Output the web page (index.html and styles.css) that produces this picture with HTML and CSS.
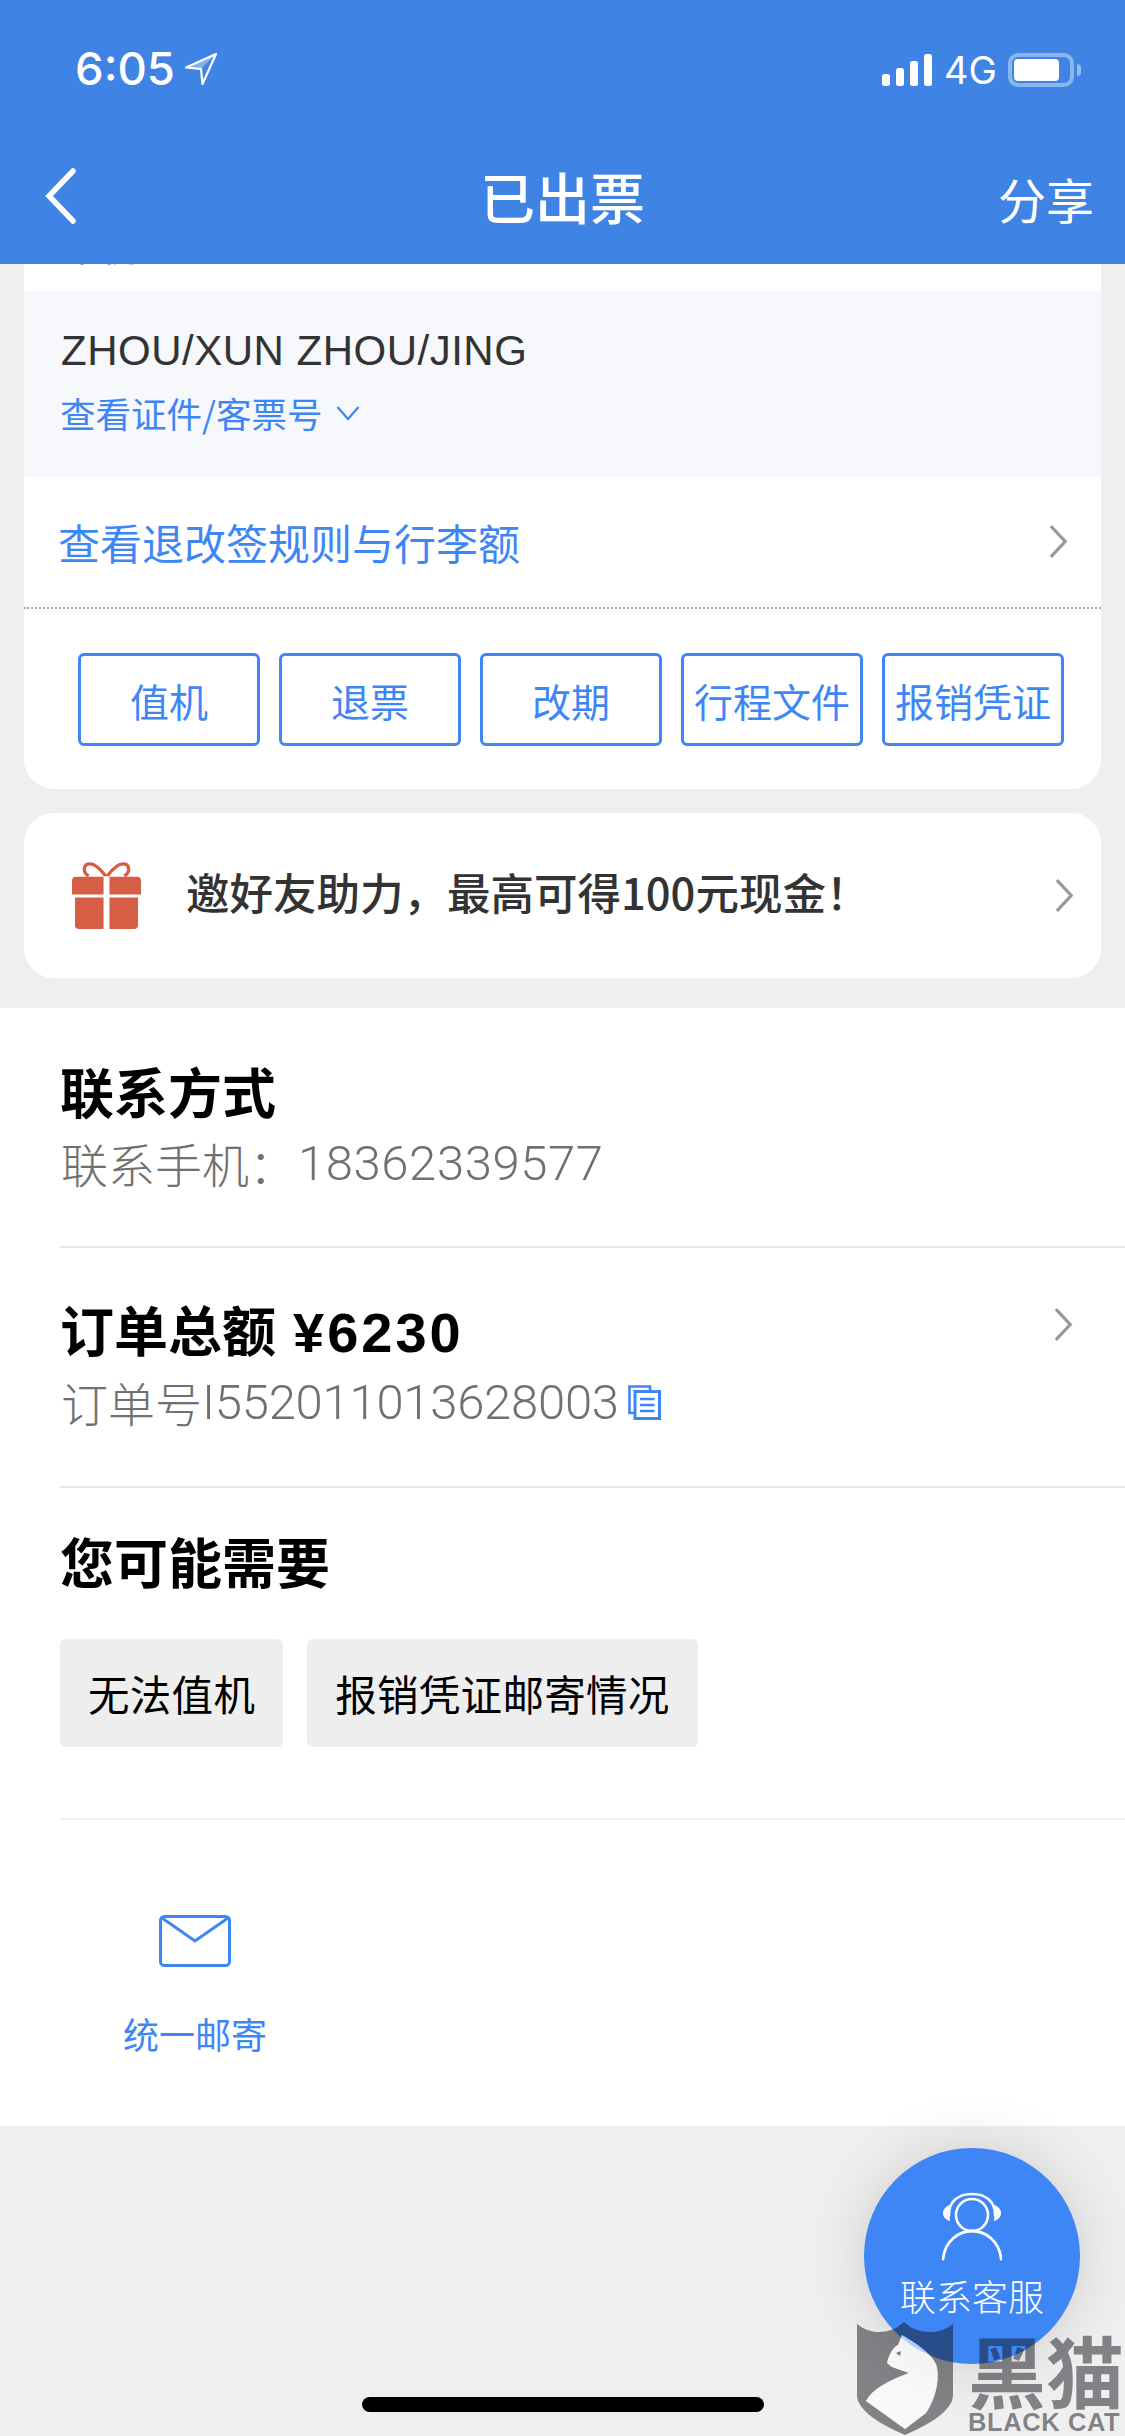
FILE: index.html
```html
<!DOCTYPE html>
<html lang="zh-CN">
<head>
<meta charset="utf-8">
<title>已出票</title>
<link rel="stylesheet" href="styles.css">
</head>
<body>
<div class="screen">
  <header class="top">
    <div class="status">
      <div class="status-left">
        <span class="time">6:05</span>
        <svg class="loc" width="32" height="32" viewBox="0 0 32 32"><path d="M1 14.500 31 1 17.500 31 16 16Z" fill="none" stroke="#fff" stroke-width="2.200" stroke-linejoin="miter"/><path d="M1 14.500 16 16 31 1Z" fill="#fff" fill-opacity=".35"/></svg>
      </div>
      <div class="status-right">
        <div class="bars"><i class="b1"></i><i class="b2"></i><i class="b3"></i><i class="b4"></i></div>
        <span class="net">4G</span>
        <div class="battery"><div class="level"></div></div>
        <div class="nub"></div>
      </div>
    </div>
    <nav class="nav">
      <svg class="back" width="32" height="56" viewBox="0 0 32 56"><path d="M28 3 4 28 28 53" fill="none" stroke="#fff" stroke-width="5.500" stroke-linecap="round" stroke-linejoin="miter"/></svg>
      <h1 class="title">已出票</h1>
      <span class="share">分享</span>
    </nav>
  </header>

  <section class="upper">
    <div class="card main">
      <div class="clip"><span>乘机人</span></div>
      <div class="passenger">
        <div class="name">ZHOU/XUN ZHOU/JING</div>
        <div class="docs">查看证件/客票号
          <svg class="down" width="24" height="16" viewBox="0 0 24 16"><path d="M1.500 2 12 14 22.500 2" fill="none" stroke="#3f86f5" stroke-width="2.200"/></svg>
        </div>
      </div>
      <div class="rules">
        <span>查看退改签规则与行李额</span>
        <svg class="chev" width="21" height="35" viewBox="0 0 22 36"><path d="M3 2 18 18 3 34" fill="none" stroke="#999" stroke-width="3.400"/></svg>
      </div>
      <div class="actions">
        <a class="act">值机</a><a class="act">退票</a><a class="act">改期</a><a class="act">行程文件</a><a class="act">报销凭证</a>
      </div>
    </div>
    <div class="card promo">
      <svg class="gift" width="69" height="67" viewBox="0 0 70 68">
        <path d="M34 14C28 6 22 1 17 2 11 3 11 11 17 14M36 14C42 6 48 1 53 2 59 3 59 11 53 14" fill="none" stroke="#d55e45" stroke-width="3.400"/>
        <path d="M4 15H32V33H0V19Q0 15 4 15ZM38 15H66Q70 15 70 19V33H38ZM3 36H32V68H7Q3 68 3 64ZM38 36H67V64Q67 68 63 68H38Z" fill="#d55e45"/>
      </svg>
      <span class="promo-text">邀好友助力，最高可得100元现金！</span>
      <svg class="chev" width="21" height="35" viewBox="0 0 22 36"><path d="M3 2 18 18 3 34" fill="none" stroke="#999" stroke-width="3.400"/></svg>
    </div>
  </section>

  <section class="lower">
    <div class="info contact">
      <h2 class="h">联系方式</h2>
      <p class="sub">联系手机：<span class="num phone">18362339577</span></p>
    </div>
    <div class="info order">
      <div class="order-head">
        <h2 class="h">订单总额<span class="price">¥6230</span></h2>
        <svg class="chev" width="21" height="35" viewBox="0 0 22 36"><path d="M3 2 18 18 3 34" fill="none" stroke="#999" stroke-width="3.400"/></svg>
      </div>
      <p class="sub">订单号<span class="num code">I552011013628003</span>
        <svg class="copy" width="33" height="35" viewBox="0 0 33 35">
          <path d="M22 6V1.500H1.500V28H7" fill="none" stroke="#3f86f5" stroke-width="2.600"/>
          <rect x="7" y="6.500" width="24.500" height="27" fill="none" stroke="#3f86f5" stroke-width="3"/>
          <path d="M12 14H26.500M12 20H26.500M12 26H26.500" stroke="#3f86f5" stroke-width="2.600"/>
        </svg>
      </p>
    </div>
    <div class="need">
      <h2 class="h">您可能需要</h2>
      <div class="tags"><span class="tag">无法值机</span><span class="tag">报销凭证邮寄情况</span></div>
    </div>
    <div class="tools">
      <div class="tool">
        <svg width="72" height="52" viewBox="0 0 72 52"><rect x="1.500" y="1.500" width="69" height="49" rx="4" fill="none" stroke="#3f86f5" stroke-width="3"/><path d="M3 3 36 26 69 3" fill="none" stroke="#3f86f5" stroke-width="3"/></svg>
        <span>统一邮寄</span>
      </div>
    </div>
  </section>

  <div class="fab">
    <svg width="60" height="70" viewBox="0 0 60 70">
      <circle cx="30" cy="23" r="16" fill="none" stroke="#fff" stroke-width="2.600"/>
      <path d="M7 24C6 10 16 2 30 2S54 10 53 24" fill="none" stroke="#fff" stroke-width="2.600"/>
      <path d="M7 13C3 15 1 18 1 21 1 25 4 28 8 29ZM53 13C57 15 59 18 59 21 59 25 56 28 52 29Z" fill="#fff"/>
      <path d="M0 67C2 49 16 39 30 39S58 49 60 67" transform="translate(1 0) scale(.97 1)" fill="none" stroke="#fff" stroke-width="2.800" stroke-linecap="round"/>
    </svg>
    <span>联系客服</span>
  </div>

  <div class="watermark">
    <svg class="shield" width="98" height="115" viewBox="0 0 98 115">
      <path fill-rule="evenodd" d="M1 3C14 14 34 14 48 1 62 14 84 14 97 3V74C97 90 72 104 49 114 26 104 1 90 1 74ZM46 14C60 22 78 34 81 46 84 62 78 80 70 92L49 108 10 80C16 68 32 60 53 52L36 46 31 42C33 34 37 26 42 24Z" fill="rgba(20,20,30,.5)"/>
      <path d="M46 14C60 22 78 34 81 46 84 62 78 80 70 92L49 108 10 80C16 68 32 60 53 52L36 46 31 42C33 34 37 26 42 24Z" fill="rgba(255,255,255,.6)"/>
      <path d="M40 32 45 30 44 35Z" fill="rgba(20,20,30,.55)"/>
    </svg>
    <div class="wm-text">
      <div class="wm-cn">黑猫</div>
      <div class="wm-en">BLACK CAT</div>
    </div>
  </div>
  <div class="home"></div>
</div>
</body>
</html>
```
FILE: styles.css
```css
* { box-sizing: border-box; }
html, body { margin: 0; padding: 0; }
body { font-family: "Noto Sans CJK SC", "Liberation Sans", sans-serif; background: #efefef; }
h1, h2, p { margin: 0; font-weight: inherit; }
.screen { position: relative; width: 1125px; height: 2436px; overflow: hidden; background: #efefef; }

.top { height: 264px; background: #3f84e5; color: #fff; padding: 0 33px 0 45px; display: flex; flex-direction: column; }
.status { height: 136px; display: flex; justify-content: space-between; align-items: flex-start; }
.status-left { display: flex; align-items: center; margin: 41px 0 0 30px; gap: 10px; }
.time { font: 500 45.500px/56px Inter, "Liberation Sans", sans-serif; }
.status-right { display: flex; align-items: center; margin-top: 52px; margin-right: 11px; }
.bars { display: flex; align-items: flex-end; gap: 6px; height: 32px; }
.bars i { display: block; width: 8px; background: #fff; border-radius: 2.500px; }
.b1 { height: 12px; } .b2 { height: 18px; } .b3 { height: 25px; } .b4 { height: 32px; }
.net { font: 400 38px/36px Inter, "Liberation Sans", sans-serif; margin: 0 14px 0 12px; width: 50px; white-space: nowrap; }
.battery { width: 66px; height: 34px; border: 4px solid rgba(255,255,255,.4); border-radius: 10px; padding: 2px; }
.level { width: 45px; height: 22px; background: #fff; border-radius: 4px; }
.nub { width: 4px; height: 12px; margin-left: 3px; background: rgba(255,255,255,.45); border-radius: 0 4px 4px 0; }

.nav { display: flex; align-items: center; justify-content: space-between; height: 122px; position: relative; }
.back { margin-top: -3px; }
.title { position: absolute; left: 0; right: 0; margin-left: -45px; margin-right: -33px; top: 25px; text-align: center; font-size: 55px; line-height: 68px; font-weight: 500; }
.share { font-size: 48px; line-height: 60px; margin: 2px -2px 0 0; }

.upper { padding: 0 24px; height: 744px; display: flex; flex-direction: column; gap: 24px; }
.card { background: #fff; width: 1077px; }
.main { height: 525px; border-radius: 0 0 30px 30px; display: flex; flex-direction: column; }
.clip { height: 27px; overflow: hidden; padding-left: 40px; }
.clip span { display: block; margin-top: -40px; font-size: 36px; line-height: 44px; color: #999; }
.passenger { height: 186px; background: #f6f8fc; padding: 35px 0 0 37px; }
.name { font: 400 42px/50px "Liberation Sans", sans-serif; color: #333; letter-spacing: .5px; }
.docs { font-size: 35.500px; line-height: 44px; color: #3f86f5; margin: 15px 0 0 -1px; display: flex; align-items: center; gap: 14px; }
.rules { height: 132px; padding: 0 32px 2px 34px; border-bottom: 2px dotted #aaa; display: flex; align-items: center; justify-content: space-between; font-size: 42px; color: #3f86f5; }
.chev { flex: none; }
.actions { display: flex; gap: 19px; padding: 44px 0 0 54px; }
.act { width: 182px; height: 93px; border: 3px solid #4285f4; border-radius: 6px; display: flex; align-items: center; justify-content: center; font-size: 39px; color: #3f86f5; }

.promo { height: 165px; border-radius: 30px; display: flex; align-items: center; padding: 0 26px 0 48px; }
.gift { flex: none; margin-right: 45px; }
.promo-text { flex: 1; font-size: 43.500px; font-weight: 500; color: #333; margin-top: -8px; }

.lower { background: #fff; height: 1118px; padding-left: 60px; display: flex; flex-direction: column; }
.info { border-bottom: 2px solid #e8e8e8; }
.contact { height: 240px; padding-top: 45px; }
.order { height: 240px; padding-top: 43px; }
.h { font-size: 54px; line-height: 76px; font-weight: 700; color: #000; }
.price { font: 700 56px/76px "Liberation Sans", sans-serif; letter-spacing: 3px; margin-left: 17px; }
.sub { font-size: 47px; line-height: 60px; color: #707070; font-weight: 300; margin-top: 3px; padding-left: 1px; display: flex; align-items: center; white-space: pre; }
.order .sub { margin-top: 0; }
.num { font: 300 49px/60px Roboto, "Liberation Sans", sans-serif; margin-top: 2px; }
.phone { letter-spacing: .6px; margin-left: 2px; }
.code { letter-spacing: -.25px; }
.order-head { display: flex; justify-content: space-between; padding-right: 50px; }
.order-head .chev { margin-top: 16px; margin-right: 1px; }
.copy { margin-left: 9px; flex: none; }
.need { height: 332px; border-bottom: 2px solid #f2f2f2; padding-top: 35px; }
.tags { display: flex; gap: 24px; margin-top: 40px; }
.tag { height: 108px; padding: 0 28px; border-radius: 6px; background: #eee; display: flex; align-items: center; font-size: 41.500px; letter-spacing: .3px; color: #000; }
.tools { padding: 95px 0 0 62px; }
.tool { width: 146px; display: flex; flex-direction: column; align-items: center; gap: 44px; font-size: 36px; line-height: 44px; color: #3f86f5; white-space: nowrap; }

.fab { position: absolute; left: 864px; top: 2148px; width: 216px; height: 216px; border-radius: 50%; background: #3e86f5; box-shadow: 0 0 60px rgba(0,0,0,.14); display: flex; flex-direction: column; align-items: center; padding-top: 44px; color: #fff; font-size: 36px; line-height: 44px; font-weight: 300; gap: 11px; }
.watermark { position: absolute; left: 856px; top: 2321px; display: flex; gap: 14px; }
.shield { display: block; }
.wm-text { display: flex; flex-direction: column; width: 160px; color: rgba(20,20,30,.5); }
.wm-cn { font-size: 78px; line-height: 78px; font-weight: 700; margin-top: 9px; }
.wm-en { font: 700 25.500px/25px "Liberation Sans", sans-serif; letter-spacing: .6px; white-space: nowrap; margin-top: 2px; }
.home { position: absolute; left: 362px; top: 2397px; width: 402px; height: 15px; border-radius: 8px; background: #000; }
```
